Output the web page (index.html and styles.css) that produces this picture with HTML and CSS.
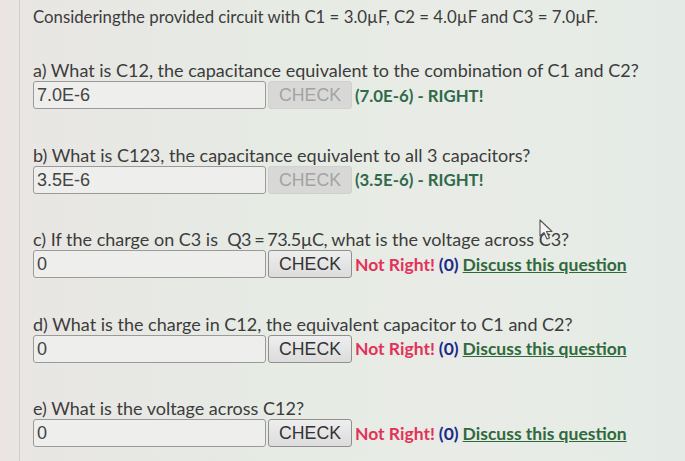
FILE: index.html
```html
<!DOCTYPE html>
<html>
<head>
<meta charset="utf-8">
<link rel="stylesheet" href="styles.css">
</head>
<body>
<div class="page">
  <p class="intro">Consideringthe provided circuit with C1 = 3.0µF, C2 = 4.0µF and C3 = 7.0µF.</p>

  <div class="q">
    <div class="qtext">a) What is C12, the capacitance equivalent to the combination of C1 and C2?</div>
    <div class="row">
      <div class="field">7.0E-6</div>
      <div class="btn btn-off">CHECK</div>
      <span class="right">(7.0E-6) - RIGHT!</span>
    </div>
  </div>

  <div class="q">
    <div class="qtext">b) What is C123, the capacitance equivalent to all 3 capacitors?</div>
    <div class="row">
      <div class="field">3.5E-6</div>
      <div class="btn btn-off">CHECK</div>
      <span class="right">(3.5E-6) - RIGHT!</span>
    </div>
  </div>

  <div class="q">
    <div class="qtext">c) If the charge on C3 is &nbsp;<span class="math">Q3 = 73.5µC,</span> what is the voltage across <span class="cursor-host">C3<svg class="cursor" width="16" height="22" viewBox="0 0 16 22"><path d="M1 1 L1 17 L5 13.5 L8 20 L10.5 19 L7.5 12.5 L13 12.5 Z" fill="#f4f4f4" stroke="#555" stroke-width="1.1" stroke-linejoin="round"/></svg></span>?</div>
    <div class="row">
      <div class="field">0</div>
      <div class="btn">CHECK</div>
      <span class="wrong">Not Right!</span> <span class="count">(0)</span> <a class="discuss">Discuss this question</a>
    </div>
  </div>

  <div class="q">
    <div class="qtext">d) What is the charge in C12, the equivalent capacitor to C1 and C2?</div>
    <div class="row">
      <div class="field">0</div>
      <div class="btn">CHECK</div>
      <span class="wrong">Not Right!</span> <span class="count">(0)</span> <a class="discuss">Discuss this question</a>
    </div>
  </div>

  <div class="q">
    <div class="qtext">e) What is the voltage across C12?</div>
    <div class="row">
      <div class="field">0</div>
      <div class="btn">CHECK</div>
      <span class="wrong">Not Right!</span> <span class="count">(0)</span> <a class="discuss">Discuss this question</a>
    </div>
  </div>
</div>
</body>
</html>
```
FILE: styles.css
```css
html, body {
  margin: 0;
  padding: 0;
  height: 100%;
}
body {
  background: linear-gradient(90deg, #ece4e2 0px, #e9e6e3 18px, #e6ebe4 40%, #e9ece6 70%, #e4ebe6 100%);
  font-family: Lato, "Open Sans", sans-serif;
  color: #3c3c3c;
  overflow: hidden;
}
.page {
  margin-left: 19px;
  border-left: 1px solid #cfcfcf;
  padding: 7px 0 0 13px;
  height: 100%;
  box-sizing: border-box;
}
.intro {
  margin: 0 0 33px 0;
  font-size: 16.8px;
  line-height: 20px;
  white-space: nowrap;
}
.q {
  margin-bottom: 35.5px;
}
.qtext {
  font-size: 18px;
  line-height: 20px;
  margin-bottom: 1px;
  white-space: nowrap;
}
.math {
  word-spacing: -1px;
  letter-spacing: -0.5px;
}
.row {
  display: flex;
  align-items: center;
  height: 28px;
  white-space: nowrap;
}
.field {
  box-sizing: border-box;
  width: 233px;
  height: 28px;
  border: 1px solid #9a9a9a;
  border-radius: 3px;
  background: #eeeeed;
  font-family: "Liberation Sans", Arial, sans-serif;
  font-size: 18px;
  line-height: 26px;
  padding-left: 3px;
  color: #444;
}
.btn {
  box-sizing: border-box;
  width: 84px;
  height: 28px;
  margin-left: 2px;
  margin-right: 3px;
  border: 1px solid #8f8f8f;
  border-radius: 3px;
  background: linear-gradient(#eeeeee, #dcdcdc);
  font-family: "Liberation Sans", Arial, sans-serif;
  font-size: 17.7px;
  line-height: 26px;
  text-align: center;
  color: #333;
}
.btn-off {
  border-color: #d0d0d0;
  background: #d8d9d7;
  color: #a3a3a3;
}
.right {
  font-weight: bold;
  color: #2f6a4c;
  font-size: 16.8px;
}
.wrong {
  font-weight: bold;
  color: #e2325a;
  font-size: 17.5px;
}
.count {
  font-weight: bold;
  color: #1c2a8a;
  font-size: 17.5px;
  margin-left: 4px;
  margin-right: 4px;
}
.discuss {
  font-weight: bold;
  color: #2f6a3c;
  font-size: 17.5px;
  text-decoration: underline;
}
.cursor-host {
  position: relative;
}
.cursor {
  position: absolute;
  left: 0px;
  top: -9px;
}
```
